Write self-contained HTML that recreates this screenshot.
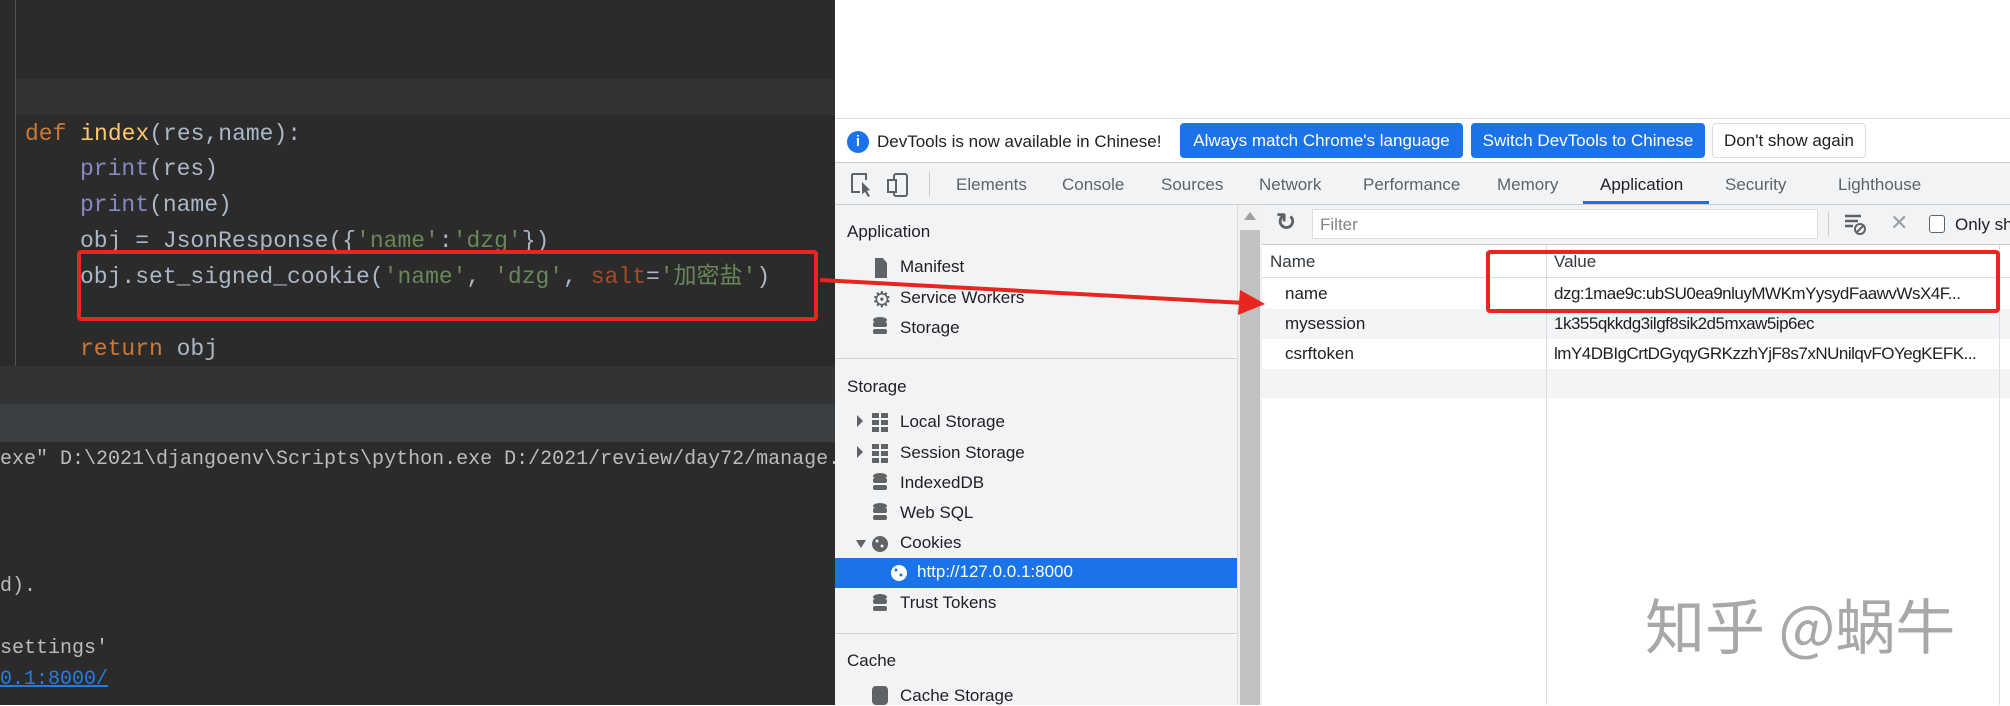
<!DOCTYPE html>
<html><head><meta charset="utf-8"><style>
*{margin:0;padding:0;box-sizing:border-box}
body{width:2010px;height:705px;overflow:hidden;position:relative;background:#fff;font-family:"Liberation Sans","Noto Sans CJK SC",sans-serif}
.a{position:absolute;white-space:nowrap}
.code{font-family:"Liberation Mono","Noto Sans CJK SC",monospace;font-size:23px;color:#a9b7c6;line-height:36px}
.kw{color:#cc7832}.fn{color:#ffc66d}.bi{color:#8888c6}.st{color:#6a8759}.kv{color:#aa4926}
.dt{font-size:17px;color:#303942;line-height:22px}
.sb{font-size:17px;color:#202124}
.ic{position:absolute;background:#5f6368}
</style></head><body>
<div class="a" style="left:0;top:0;width:835px;height:705px;background:#2b2b2b"></div>
<div class="a" style="left:15px;top:79px;width:820px;height:36px;background:#313335"></div>
<div class="a" style="left:0;top:366px;width:835px;height:38px;background:#313335"></div>
<div class="a" style="left:0;top:404px;width:835px;height:38px;background:#3c3f41"></div>
<div class="a" style="left:15px;top:0;width:1px;height:366px;background:#555"></div>
<div class="a code" style="left:25px;top:116px"><span class="kw">def</span> <span class="fn">index</span>(res,name):</div>
<div class="a code" style="left:80px;top:151px"><span class="bi">print</span>(res)</div>
<div class="a code" style="left:80px;top:187px"><span class="bi">print</span>(name)</div>
<div class="a code" style="left:80px;top:223px">obj = JsonResponse({<span class="st">'name'</span>:<span class="st">'dzg'</span>})</div>
<div class="a code" style="left:80px;top:259px">obj.set_signed_cookie(<span class="st">'name'</span>, <span class="st">'dzg'</span>, <span class="kv">salt</span>=<span class="st">'加密盐'</span>)</div>
<div class="a code" style="left:80px;top:331px"><span class="kw">return</span> obj</div>
<div class="a code" style="left:0;top:442px;color:#bbb;font-size:20px">exe" D:\2021\djangoenv\Scripts\python.exe D:/2021/review/day72/manage.</div>
<div class="a code" style="left:0;top:569px;color:#bbb;font-size:20px">d).</div>
<div class="a code" style="left:0;top:631px;color:#bbb;font-size:20px">settings'</div>
<div class="a code" style="left:0;top:662px;color:#287bde;font-size:20px;text-decoration:underline">0.1:8000/</div>
<div class="a" style="left:77px;top:250px;width:741px;height:71px;border:4px solid #e8261f;border-radius:4px"></div>

<div class="a" style="left:835px;top:118px;width:1175px;height:45px;background:#fff;border-top:1px solid #ddd;border-bottom:1px solid #ccc"></div>
<div class="a" style="left:847px;top:131px;width:22px;height:22px;border-radius:50%;background:#1a73e8;color:#fff;font-size:15px;text-align:center;line-height:22px;font-weight:bold">i</div>
<div class="a dt" style="left:877px;top:131px;color:#202124">DevTools is now available in Chinese!</div>
<div class="a dt" style="left:1180px;top:123px;width:283px;height:35px;background:#1a73e8;color:#fff;border-radius:4px;text-align:center;line-height:35px">Always match Chrome's language</div>
<div class="a dt" style="left:1471px;top:123px;width:234px;height:35px;background:#1a73e8;color:#fff;border-radius:4px;text-align:center;line-height:35px">Switch DevTools to Chinese</div>
<div class="a dt" style="left:1712px;top:123px;width:154px;height:35px;border:1px solid #dadce0;color:#202124;border-radius:4px;text-align:center;line-height:33px">Don't show again</div>

<div class="a" style="left:835px;top:163px;width:1175px;height:42px;background:#f1f3f4;border-bottom:1px solid #cacdd1"></div>
<svg class="a" style="left:850px;top:172px" width="70" height="26"><path d="M2 2h14v6M2 2v18h8" fill="none" stroke="#5f6368" stroke-width="2"/><path d="M12 10l8 8-3 1 3 5-2 1-3-5-3 2z" fill="#5f6368"/><rect x="44" y="2" width="13" height="22" rx="2" fill="none" stroke="#5f6368" stroke-width="2"/><rect x="38" y="8" width="8" height="12" fill="#f1f3f4" stroke="#5f6368" stroke-width="2"/></svg>
<div class="a" style="left:929px;top:172px;width:1px;height:24px;background:#ccc"></div>
<div class="a dt" style="left:956px;top:174px;color:#5f6368">Elements</div>
<div class="a dt" style="left:1062px;top:174px;color:#5f6368">Console</div>
<div class="a dt" style="left:1161px;top:174px;color:#5f6368">Sources</div>
<div class="a dt" style="left:1259px;top:174px;color:#5f6368">Network</div>
<div class="a dt" style="left:1363px;top:174px;color:#5f6368">Performance</div>
<div class="a dt" style="left:1497px;top:174px;color:#5f6368">Memory</div>
<div class="a dt" style="left:1600px;top:174px;color:#202124">Application</div>
<div class="a dt" style="left:1725px;top:174px;color:#5f6368">Security</div>
<div class="a dt" style="left:1838px;top:174px;color:#5f6368">Lighthouse</div>
<div class="a" style="left:1583px;top:201px;width:126px;height:3px;background:#1a73e8"></div>

<div class="a" style="left:835px;top:205px;width:402px;height:500px;background:#f1f3f4"></div>
<div class="a" style="left:1237px;top:205px;width:25px;height:500px;background:#f1f1f1;border-left:1px solid #ddd"></div>
<div class="a" style="left:1240px;top:230px;width:20px;height:475px;background:#c1c1c1"></div>
<div class="a" style="left:1244px;top:212px;width:0;height:0;border-left:6px solid transparent;border-right:6px solid transparent;border-bottom:8px solid #a0a0a0"></div>
<div class="a sb" style="left:847px;top:222px">Application</div>
<div class="a sb" style="left:900px;top:257px">Manifest</div>
<div class="a sb" style="left:900px;top:288px">Service Workers</div>
<div class="a sb" style="left:900px;top:318px">Storage</div>
<div class="a" style="left:835px;top:358px;width:402px;height:1px;background:#d0d0d0"></div>
<div class="a sb" style="left:847px;top:377px">Storage</div>
<div class="a sb" style="left:900px;top:412px">Local Storage</div>
<div class="a sb" style="left:900px;top:443px">Session Storage</div>
<div class="a sb" style="left:900px;top:473px">IndexedDB</div>
<div class="a sb" style="left:900px;top:503px">Web SQL</div>
<div class="a sb" style="left:900px;top:533px">Cookies</div>
<div class="a" style="left:835px;top:558px;width:402px;height:30px;background:#1a73e8"></div>
<div class="a sb" style="left:917px;top:562px;color:#fff">http://127.0.0.1:8000</div>
<div class="a sb" style="left:900px;top:593px">Trust Tokens</div>
<div class="a" style="left:835px;top:633px;width:402px;height:1px;background:#d0d0d0"></div>
<div class="a sb" style="left:847px;top:651px">Cache</div>
<div class="a sb" style="left:900px;top:686px">Cache Storage</div>
<div class="ic" style="left:875px;top:258px;width:12px;height:20px;clip-path:polygon(0 0,65% 0,100% 25%,100% 100%,0 100%)"></div>
<div class="a" style="left:872px;top:287px;font-size:22px;color:#5f6368">⚙</div>
<svg class="a" style="left:872px;top:316px" width="16" height="300"><defs><g id="db" fill="#5f6368"><ellipse cx="8" cy="4" rx="7" ry="3"/><rect x="1" y="6" width="14" height="5" rx="2"/><rect x="1" y="13" width="14" height="5" rx="2"/></g></defs><use href="#db"/><use href="#db" y="156"/><use href="#db" y="186"/><use href="#db" y="277"/></svg>
<svg class="a" style="left:855px;top:413px" width="35" height="50"><path d="M2 2l6 6-6 6z" fill="#5f6368"/><path d="M2 33l6 6-6 6z" fill="#5f6368"/><g fill="#5f6368"><rect x="17" y="0" width="7" height="5"/><rect x="26" y="0" width="7" height="5"/><rect x="17" y="7" width="7" height="5"/><rect x="26" y="7" width="7" height="5"/><rect x="17" y="14" width="7" height="5"/><rect x="26" y="14" width="7" height="5"/><rect x="17" y="31" width="7" height="5"/><rect x="26" y="31" width="7" height="5"/><rect x="17" y="38" width="7" height="5"/><rect x="26" y="38" width="7" height="5"/><rect x="17" y="45" width="7" height="5"/><rect x="26" y="45" width="7" height="5"/></g></svg>
<svg class="a" style="left:855px;top:534px" width="35" height="20"><path d="M1 6h10l-5 8z" fill="#5f6368"/><circle cx="25" cy="10" r="8" fill="#5f6368"/><circle cx="22" cy="7" r="1.5" fill="#f1f3f4"/><circle cx="27" cy="12" r="1.5" fill="#f1f3f4"/></svg>
<svg class="a" style="left:890px;top:563px" width="18" height="20"><circle cx="9" cy="10" r="8" fill="#fff"/><circle cx="6" cy="7" r="1.5" fill="#1a73e8"/><circle cx="11" cy="12" r="1.5" fill="#1a73e8"/></svg>
<div class="ic" style="left:872px;top:686px;width:16px;height:19px;border-radius:4px"></div>

<div class="a" style="left:1262px;top:205px;width:748px;height:40px;background:#f1f3f4;border-bottom:1px solid #cacdd1"></div>
<div class="a" style="left:1276px;top:208px;font-size:24px;color:#5f6368;font-weight:bold">↻</div>
<div class="a" style="left:1312px;top:209px;width:506px;height:30px;background:#fff;border:1px solid #dadce0"></div>
<div class="a dt" style="left:1320px;top:214px;color:#80868b">Filter</div>
<div class="a" style="left:1828px;top:212px;width:1px;height:24px;background:#ccc"></div>
<svg class="a" style="left:1844px;top:213px" width="24" height="24"><g stroke="#5f6368" stroke-width="2.5"><path d="M1 3h16M1 8h13M1 13h8"/></g><circle cx="16" cy="16" r="5" fill="none" stroke="#5f6368" stroke-width="2"/><path d="M12 20l8-8" stroke="#5f6368" stroke-width="2"/></svg>
<div class="a" style="left:1890px;top:210px;font-size:22px;color:#9aa0a6">✕</div>
<div class="a" style="left:1929px;top:215px;width:16px;height:18px;border:1.5px solid #5f6368;border-radius:3px;background:#fff"></div>
<div class="a dt" style="left:1955px;top:214px;color:#202124">Only sh</div>

<div class="a" style="left:1262px;top:245px;width:748px;height:460px;background:#fff"></div>
<div class="a" style="left:1262px;top:245px;width:748px;height:33px;border-bottom:1px solid #dadce0;background:#fff"></div>
<div class="a" style="left:1262px;top:309px;width:748px;height:30px;background:#f3f4f5"></div>
<div class="a" style="left:1262px;top:369px;width:748px;height:29px;background:#f3f4f5"></div>
<div class="a" style="left:1546px;top:245px;width:1px;height:460px;background:#dadce0"></div>
<div class="a" style="left:1999px;top:245px;width:1px;height:460px;background:#dadce0"></div>
<div class="a dt" style="left:1270px;top:251px">Name</div>
<div class="a dt" style="left:1554px;top:251px">Value</div>
<div class="a dt" style="left:1285px;top:283px;color:#202124">name</div>
<div class="a dt" style="left:1285px;top:313px;color:#202124">mysession</div>
<div class="a dt" style="left:1285px;top:343px;color:#202124">csrftoken</div>
<div class="a dt" style="left:1554px;top:283px;color:#202124;letter-spacing:-0.5px">dzg:1mae9c:ubSU0ea9nluyMWKmYysydFaawvWsX4F...</div>
<div class="a dt" style="left:1554px;top:313px;color:#202124;letter-spacing:-0.5px">1k355qkkdg3ilgf8sik2d5mxaw5ip6ec</div>
<div class="a dt" style="left:1554px;top:343px;color:#202124;letter-spacing:-0.5px">lmY4DBIgCrtDGyqyGRKzzhYjF8s7xNUnilqvFOYegKEFK...</div>

<div class="a" style="left:1486px;top:250px;width:514px;height:63px;border:4px solid #e8261f;border-radius:4px"></div>
<svg class="a" style="left:815px;top:270px" width="460" height="50"><path d="M5 10L430 33" stroke="#e8261f" stroke-width="4"/><path d="M425 20L450 34L423 45z" fill="#e8261f"/></svg>

<div class="a" style="left:1645px;top:580px;font-size:60px;color:#a8a8a8;font-family:'Noto Sans CJK SC',sans-serif">知乎 @蜗牛</div>
</body></html>
